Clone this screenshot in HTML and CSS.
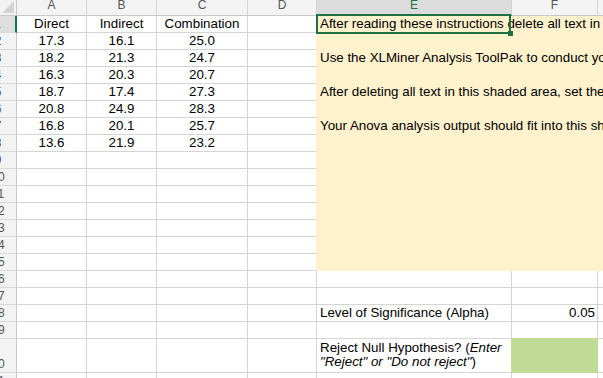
FILE: index.html
```html
<!DOCTYPE html>
<html>
<head>
<meta charset="utf-8">
<link rel="stylesheet" href="styles.css">
</head>
<body>
<div class="sheet">
  <div class="row hdr">
    <div class="rh corner"><span class="tri"></span></div>
    <div class="c a">A</div>
    <div class="c b">B</div>
    <div class="c cc">C</div>
    <div class="c d">D</div>
    <div class="c e selcol">E</div>
    <div class="c f">F</div>
    <div class="c g"></div>
  </div>
  <div class="row">
    <div class="rh selrow">1</div>
    <div class="c a ctr">Direct</div>
    <div class="c b ctr">Indirect</div>
    <div class="c cc ctr">Combination</div>
    <div class="c d dy"></div>
    <div class="c e y ov e1">After reading these instructions delete all text in this shaded area<div class="selbox"><span class="handle"></span></div></div>
    <div class="c f y"></div>
    <div class="c g y"></div>
  </div>
  <div class="row">
    <div class="rh">2</div>
    <div class="c a ctr">17.3</div>
    <div class="c b ctr">16.1</div>
    <div class="c cc ctr">25.0</div>
    <div class="c d dy"></div>
    <div class="c e y"></div>
    <div class="c f y"></div>
    <div class="c g y"></div>
  </div>
  <div class="row">
    <div class="rh">3</div>
    <div class="c a ctr">18.2</div>
    <div class="c b ctr">21.3</div>
    <div class="c cc ctr">24.7</div>
    <div class="c d dy"></div>
    <div class="c e y ov">Use the XLMiner Analysis ToolPak to conduct your analysis</div>
    <div class="c f y"></div>
    <div class="c g y"></div>
  </div>
  <div class="row">
    <div class="rh">4</div>
    <div class="c a ctr">16.3</div>
    <div class="c b ctr">20.3</div>
    <div class="c cc ctr">20.7</div>
    <div class="c d dy"></div>
    <div class="c e y"></div>
    <div class="c f y"></div>
    <div class="c g y"></div>
  </div>
  <div class="row">
    <div class="rh">5</div>
    <div class="c a ctr">18.7</div>
    <div class="c b ctr">17.4</div>
    <div class="c cc ctr">27.3</div>
    <div class="c d dy"></div>
    <div class="c e y ov">After deleting all text in this shaded area, set the output range</div>
    <div class="c f y"></div>
    <div class="c g y"></div>
  </div>
  <div class="row">
    <div class="rh">6</div>
    <div class="c a ctr">20.8</div>
    <div class="c b ctr">24.9</div>
    <div class="c cc ctr">28.3</div>
    <div class="c d dy"></div>
    <div class="c e y"></div>
    <div class="c f y"></div>
    <div class="c g y"></div>
  </div>
  <div class="row">
    <div class="rh">7</div>
    <div class="c a ctr">16.8</div>
    <div class="c b ctr">20.1</div>
    <div class="c cc ctr">25.7</div>
    <div class="c d dy"></div>
    <div class="c e y ov">Your Anova analysis output should fit into this shaded area</div>
    <div class="c f y"></div>
    <div class="c g y"></div>
  </div>
  <div class="row">
    <div class="rh">8</div>
    <div class="c a ctr">13.6</div>
    <div class="c b ctr">21.9</div>
    <div class="c cc ctr">23.2</div>
    <div class="c d dy"></div>
    <div class="c e y"></div>
    <div class="c f y"></div>
    <div class="c g y"></div>
  </div>
  <div class="row">
    <div class="rh">9</div>
    <div class="c a"></div><div class="c b"></div><div class="c cc"></div><div class="c d dy"></div>
    <div class="c e y"></div><div class="c f y"></div><div class="c g y"></div>
  </div>
  <div class="row">
    <div class="rh">10</div>
    <div class="c a"></div><div class="c b"></div><div class="c cc"></div><div class="c d dy"></div>
    <div class="c e y"></div><div class="c f y"></div><div class="c g y"></div>
  </div>
  <div class="row">
    <div class="rh">11</div>
    <div class="c a"></div><div class="c b"></div><div class="c cc"></div><div class="c d dy"></div>
    <div class="c e y"></div><div class="c f y"></div><div class="c g y"></div>
  </div>
  <div class="row">
    <div class="rh">12</div>
    <div class="c a"></div><div class="c b"></div><div class="c cc"></div><div class="c d dy"></div>
    <div class="c e y"></div><div class="c f y"></div><div class="c g y"></div>
  </div>
  <div class="row">
    <div class="rh">13</div>
    <div class="c a"></div><div class="c b"></div><div class="c cc"></div><div class="c d dy"></div>
    <div class="c e y"></div><div class="c f y"></div><div class="c g y"></div>
  </div>
  <div class="row">
    <div class="rh">14</div>
    <div class="c a"></div><div class="c b"></div><div class="c cc"></div><div class="c d dy"></div>
    <div class="c e y"></div><div class="c f y"></div><div class="c g y"></div>
  </div>
  <div class="row">
    <div class="rh">15</div>
    <div class="c a"></div><div class="c b"></div><div class="c cc"></div><div class="c d dy"></div>
    <div class="c e y"></div><div class="c f y"></div><div class="c g y"></div>
  </div>
  <div class="row">
    <div class="rh">16</div>
    <div class="c a"></div><div class="c b"></div><div class="c cc"></div><div class="c d"></div>
    <div class="c e"></div><div class="c f"></div><div class="c g"></div>
  </div>
  <div class="row">
    <div class="rh">17</div>
    <div class="c a"></div><div class="c b"></div><div class="c cc"></div><div class="c d"></div>
    <div class="c e"></div><div class="c f"></div><div class="c g"></div>
  </div>
  <div class="row">
    <div class="rh">18</div>
    <div class="c a"></div><div class="c b"></div><div class="c cc"></div><div class="c d"></div>
    <div class="c e">Level of Significance (Alpha)</div><div class="c f rt">0.05</div><div class="c g"></div>
  </div>
  <div class="row">
    <div class="rh">19</div>
    <div class="c a"></div><div class="c b"></div><div class="c cc"></div><div class="c d"></div>
    <div class="c e"></div><div class="c f gb"></div><div class="c g"></div>
  </div>
  <div class="row tall">
    <div class="rh">20</div>
    <div class="c a"></div><div class="c b"></div><div class="c cc"></div><div class="c d"></div>
    <div class="c e wrap gr">Reject Null Hypothesis? (<i>Enter</i><br><i>"Reject" or "Do not reject"</i>)</div>
    <div class="c f green"></div><div class="c g"></div>
  </div>
  <div class="row">
    <div class="rh">21</div>
    <div class="c a"></div><div class="c b"></div><div class="c cc"></div><div class="c d"></div>
    <div class="c e"></div><div class="c f"></div><div class="c g"></div>
  </div>
</div>
</body>
</html>
```
FILE: styles.css
```css
* { box-sizing: border-box; }
html, body { margin: 0; padding: 0; }
body {
  background: #ffffff;
  overflow: hidden;
  font-family: "Liberation Sans", Arial, sans-serif;
  color: #000;
}
.sheet { margin-left: -20px; width: 640px; }
.row { display: flex; height: 17px; }
.row.hdr { height: 16px; }
.row.tall { height: 34px; }

.rh {
  flex: none;
  width: 37px;
  background: #f3f3f3;
  border-right: 1px solid #c9c9c9;
  border-bottom: 1px solid #d9d9d9;
  color: #555;
  font-size: 12px;
  line-height: 16px;
  display: flex;
  justify-content: center;
  align-items: flex-end;
}
.rh.selrow {
  background: #dedede;
  border-right: 2px solid #1e7145;
  color: #1e7145;
}
.corner {
  background: #f3f3f3;
  justify-content: flex-end;
  align-items: flex-end;
  padding: 0 2px 2px 0;
  border-bottom: 1px solid #c9c9c9;
}
.tri {
  width: 12px;
  height: 12px;
  background: #d3d3d3;
  clip-path: polygon(100% 0, 100% 100%, 0 100%);
}

.c {
  flex: none;
  border-right: 1px solid #d5d5d5;
  border-bottom: 1px solid #d5d5d5;
  font-size: 13.33px;
  line-height: 16px;
  padding: 0 3px;
  white-space: nowrap;
}
.a { width: 70px; }
.b { width: 70px; }
.cc { width: 91px; }
.d { width: 69px; }
.e { width: 195px; }
.f { width: 86px; }
.g { flex: 1 1 auto; }

.hdr .c {
  background: #f3f3f3;
  border-right: 1px solid #d3d3d3;
  border-bottom: 1px solid #c9c9c9;
  color: #555;
  font-size: 12px;
  line-height: 11px;
  text-align: center;
}
.hdr .selcol {
  background: #dcdcdc;
  color: #1e7145;
  border-bottom: 2px solid #1e7145;
}

.ctr { text-align: center; }
.rt { text-align: right; padding-right: 2px; }

.y {
  background: #fff2cc;
  border-right-color: #fff2cc;
  border-bottom-color: #fff2cc;
}
.dy { border-right-color: #fff2cc; }

.ov { position: relative; z-index: 1; }
.selbox {
  position: absolute;
  left: -1px;
  top: -2px;
  width: 195px;
  height: 20px;
  border: 2px solid #1e7145;
}
.handle {
  position: absolute;
  right: -4px;
  bottom: -4px;
  width: 5px;
  height: 5px;
  background: #1e7145;
}

.wrap {
  line-height: 14.5px;
  padding-top: 1.5px;
}
.gr { border-right-color: #bfdb96; }
.gb { border-bottom-color: #bfdb96; }
.green {
  background: #bfdb96;
  border-right-color: #bfdb96;
  border-bottom-color: #bfdb96;
}
```
